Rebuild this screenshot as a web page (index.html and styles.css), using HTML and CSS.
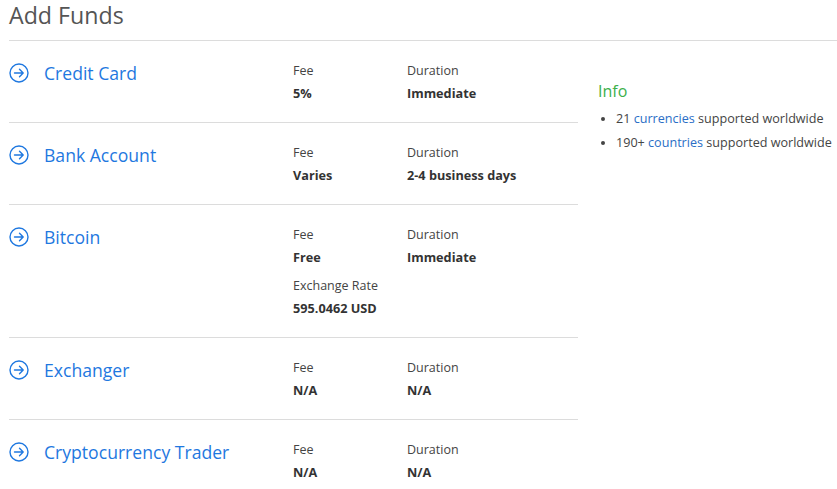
FILE: index.html
```html
<!DOCTYPE html>
<html>
<head>
<meta charset="utf-8">
<link rel="stylesheet" href="styles.css">
</head>
<body>
<div class="page">
  <h1 class="title">Add Funds</h1>
  <div class="content">
    <div class="methods">
      <div class="method">
        <div class="name"><svg class="icon" viewBox="0 0 20 20"><circle cx="10" cy="10" r="9" /><path d="M5.5 10h8.5M10.5 6.3L14.2 10l-3.7 3.7" /></svg><a>Credit Card</a></div>
        <div class="details">
          <div class="pair"><div class="lbl">Fee</div><div class="val">5%</div></div>
          <div class="pair"><div class="lbl">Duration</div><div class="val">Immediate</div></div>
        </div>
      </div>
      <div class="method">
        <div class="name"><svg class="icon" viewBox="0 0 20 20"><circle cx="10" cy="10" r="9" /><path d="M5.5 10h8.5M10.5 6.3L14.2 10l-3.7 3.7" /></svg><a>Bank Account</a></div>
        <div class="details">
          <div class="pair"><div class="lbl">Fee</div><div class="val">Varies</div></div>
          <div class="pair"><div class="lbl">Duration</div><div class="val">2-4 business days</div></div>
        </div>
      </div>
      <div class="method">
        <div class="name"><svg class="icon" viewBox="0 0 20 20"><circle cx="10" cy="10" r="9" /><path d="M5.5 10h8.5M10.5 6.3L14.2 10l-3.7 3.7" /></svg><a>Bitcoin</a></div>
        <div class="details">
          <div class="pair"><div class="lbl">Fee</div><div class="val">Free</div></div>
          <div class="pair"><div class="lbl">Duration</div><div class="val">Immediate</div></div>
          <div class="pair wide"><div class="lbl">Exchange Rate</div><div class="val">595.0462 USD</div></div>
        </div>
      </div>
      <div class="method">
        <div class="name"><svg class="icon" viewBox="0 0 20 20"><circle cx="10" cy="10" r="9" /><path d="M5.5 10h8.5M10.5 6.3L14.2 10l-3.7 3.7" /></svg><a>Exchanger</a></div>
        <div class="details">
          <div class="pair"><div class="lbl">Fee</div><div class="val">N/A</div></div>
          <div class="pair"><div class="lbl">Duration</div><div class="val">N/A</div></div>
        </div>
      </div>
      <div class="method">
        <div class="name"><svg class="icon" viewBox="0 0 20 20"><circle cx="10" cy="10" r="9" /><path d="M5.5 10h8.5M10.5 6.3L14.2 10l-3.7 3.7" /></svg><a>Cryptocurrency Trader</a></div>
        <div class="details">
          <div class="pair"><div class="lbl">Fee</div><div class="val">N/A</div></div>
          <div class="pair"><div class="lbl">Duration</div><div class="val">N/A</div></div>
        </div>
      </div>
    </div>
    <aside class="info">
      <h2 class="info-title">Info</h2>
      <ul class="info-list">
        <li>21 <a>currencies</a> supported worldwide</li>
        <li>190+ <a>countries</a> supported worldwide</li>
      </ul>
    </aside>
  </div>
</div>
</body>
</html>
```
FILE: styles.css
```css
html, body {
  margin: 0;
  padding: 0;
  background: #fff;
}
body {
  font-family: "Open Sans", "DejaVu Sans", sans-serif;
  color: #444;
  overflow: hidden;
}
.page {
  padding-left: 9px;
}
.title {
  margin: 0;
  font-size: 23.2px;
  font-weight: 400;
  line-height: 30px;
  color: #555;
  padding-bottom: 10px;
  border-bottom: 1px solid #dcdcdc;
}
.content {
  display: flex;
}
.methods {
  width: 569px;
  flex: none;
}
.method {
  display: flex;
  padding: 20px 0 18px 0;
  border-bottom: 1px solid #dcdcdc;
}
.name {
  width: 284px;
  flex: none;
  display: flex;
  align-items: center;
  align-self: flex-start;
  height: 26px;
  margin-top: -1px;
}
.icon {
  width: 20px;
  height: 20px;
  margin-right: 15px;
  fill: none;
  stroke: #1f78e0;
  stroke-width: 1.4;
  stroke-linecap: round;
  stroke-linejoin: round;
}
.name a {
  font-size: 17.6px;
  line-height: 26px;
  color: #1f78e0;
}
.details {
  display: flex;
  flex-wrap: wrap;
  flex: 1;
  row-gap: 8px;
}
.pair {
  width: 114px;
}
.pair.wide {
  width: 100%;
}
.lbl {
  font-size: 12.5px;
  line-height: 20px;
  color: #444;
}
.val {
  font-size: 12.7px;
  line-height: 20px;
  margin-top: 2px;
  margin-bottom: 1px;
  font-weight: 700;
  color: #333;
}
.info {
  padding-left: 20px;
  padding-top: 39px;
  white-space: nowrap;
}
.info-title {
  margin: 0;
  font-size: 16px;
  font-weight: 400;
  line-height: 22px;
  color: #3cb04a;
}
.info-list {
  margin: 5px 0 0;
  padding-left: 18px;
  font-size: 12.6px;
  line-height: 24px;
  color: #444;
}
.info-list a {
  color: #2a6ec6;
}
```
